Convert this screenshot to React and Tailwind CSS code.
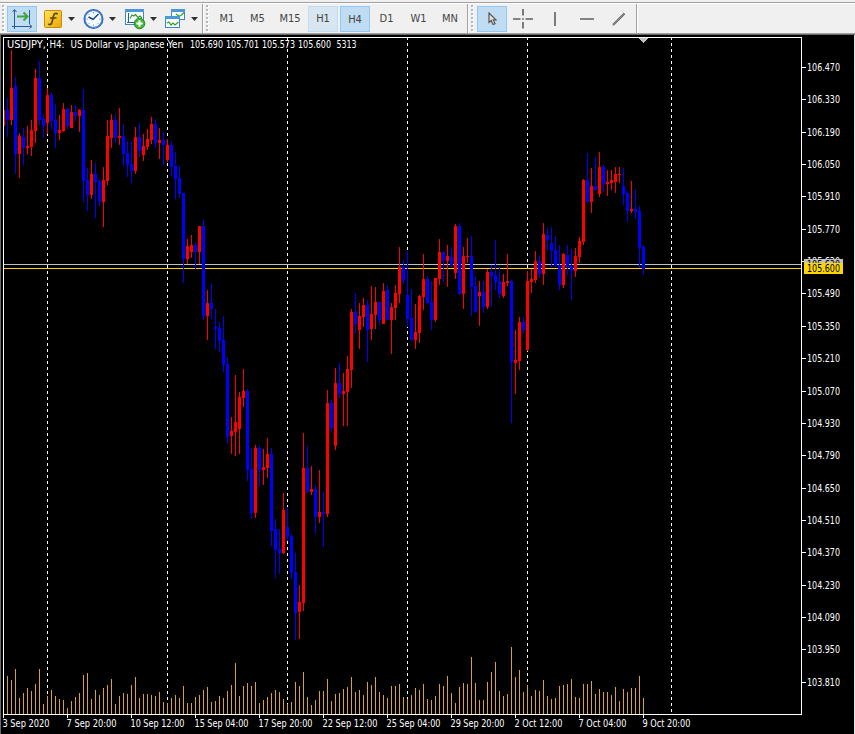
import React from 'react';

// Chart geometry
const STEP = 4;
const LEFT = 3;
const RIGHT = 801;
const TOP = 37;
const BASE = 714;

// [direction, high, body top, body bottom, low], 1 = up (red), 0 = down (blue)
const CANDLES = [
  [1, 110, 110, 126, 126], [0, 98, 110, 120, 137], [1, 50, 88, 120, 125], [0, 77, 86, 154, 174],
  [1, 133, 136, 154, 178], [0, 128, 137, 148, 165], [1, 126, 146, 148, 154], [1, 120, 130, 147, 156],
  [1, 69, 78, 131, 143], [0, 61, 78, 120, 125], [0, 115, 119, 126, 138], [1, 88, 95, 123, 134],
  [0, 93, 95, 121, 129], [0, 104, 120, 133, 148], [1, 115, 130, 133, 140], [1, 103, 109, 131, 132],
  [0, 108, 109, 126, 129], [1, 105, 112, 128, 128], [0, 105, 112, 116, 121], [1, 109, 110, 116, 132],
  [0, 89, 110, 181, 202], [0, 168, 180, 195, 211], [1, 160, 174, 195, 199], [0, 163, 174, 182, 218],
  [0, 180, 181, 202, 206], [1, 167, 180, 202, 227], [1, 120, 136, 181, 185], [1, 114, 120, 138, 148],
  [0, 114, 120, 138, 143], [1, 108, 136, 138, 145], [0, 124, 136, 154, 166], [0, 141, 153, 165, 177],
  [0, 141, 164, 171, 183], [1, 127, 137, 171, 174], [0, 123, 137, 151, 157], [1, 134, 146, 155, 161],
  [1, 129, 139, 147, 150], [1, 117, 124, 140, 144], [0, 119, 124, 143, 148], [1, 128, 140, 143, 159],
  [0, 132, 140, 145, 165], [1, 139, 145, 160, 162], [0, 141, 145, 167, 176], [0, 152, 166, 179, 199],
  [0, 166, 178, 194, 198], [0, 193, 193, 259, 283], [1, 239, 246, 259, 264], [1, 235, 245, 252, 258],
  [0, 242, 245, 252, 270], [1, 226, 226, 252, 264], [0, 220, 226, 316, 320], [1, 290, 303, 316, 340],
  [0, 284, 303, 309, 319], [0, 309, 327, 329, 349], [0, 322, 328, 341, 352], [0, 316, 340, 365, 372],
  [0, 357, 364, 437, 444], [1, 417, 431, 436, 454], [1, 375, 422, 432, 456], [1, 392, 397, 429, 454],
  [1, 369, 391, 398, 407], [0, 389, 391, 470, 481], [0, 448, 469, 513, 519], [1, 445, 448, 513, 518],
  [0, 445, 448, 470, 487], [1, 449, 467, 470, 485], [1, 438, 454, 468, 478], [0, 448, 454, 531, 546],
  [0, 519, 529, 550, 578], [0, 529, 549, 553, 574], [1, 493, 510, 553, 554], [0, 507, 527, 537, 541],
  [0, 534, 536, 573, 579], [0, 553, 572, 613, 640], [1, 585, 602, 612, 639], [1, 433, 468, 603, 611],
  [0, 446, 468, 492, 493], [1, 466, 489, 492, 495], [0, 485, 489, 517, 534], [1, 470, 512, 517, 523],
  [0, 492, 512, 514, 547], [1, 390, 403, 514, 517], [0, 399, 403, 428, 433], [1, 368, 383, 446, 450],
  [0, 363, 383, 394, 398], [1, 373, 391, 394, 426], [1, 356, 369, 392, 426], [1, 309, 312, 370, 388],
  [0, 293, 312, 324, 334], [1, 303, 316, 330, 349], [1, 298, 305, 317, 327], [0, 300, 305, 330, 362],
  [1, 286, 314, 329, 340], [1, 287, 302, 315, 329], [0, 302, 302, 320, 325], [1, 283, 291, 324, 324],
  [0, 285, 290, 320, 320], [1, 303, 307, 320, 354], [1, 285, 293, 308, 320], [1, 247, 267, 294, 303],
  [0, 260, 267, 280, 284], [0, 251, 295, 319, 327], [0, 289, 318, 340, 341], [1, 304, 332, 340, 349],
  [1, 295, 296, 333, 343], [1, 254, 279, 297, 310], [0, 276, 279, 303, 304], [0, 281, 302, 320, 330],
  [1, 278, 278, 320, 322], [1, 239, 252, 279, 285], [0, 251, 252, 261, 282], [1, 245, 256, 261, 287],
  [0, 247, 257, 265, 267], [1, 224, 226, 273, 279], [0, 223, 226, 294, 295], [1, 247, 256, 294, 309],
  [1, 238, 256, 257, 263], [0, 236, 256, 287, 316], [0, 276, 286, 312, 313], [1, 281, 292, 296, 326],
  [0, 281, 292, 307, 313], [1, 269, 272, 307, 309], [0, 265, 272, 276, 307], [0, 240, 275, 282, 290],
  [0, 267, 281, 294, 298], [1, 274, 282, 296, 298], [1, 254, 281, 283, 286], [0, 280, 281, 362, 423],
  [1, 330, 360, 363, 394], [1, 317, 322, 361, 370], [0, 317, 322, 330, 334], [1, 271, 281, 350, 351],
  [1, 269, 279, 282, 293], [1, 251, 261, 280, 283], [0, 255, 261, 274, 278], [1, 223, 234, 274, 285],
  [0, 228, 235, 240, 250], [0, 227, 243, 251, 267], [0, 236, 250, 266, 267], [0, 245, 265, 285, 290],
  [1, 253, 254, 285, 288], [0, 245, 255, 267, 275], [0, 249, 266, 271, 300], [1, 248, 256, 271, 277],
  [1, 237, 241, 257, 263], [1, 179, 180, 242, 245], [0, 153, 180, 202, 203], [1, 168, 186, 202, 213],
  [0, 157, 186, 190, 191], [1, 152, 167, 194, 197], [0, 165, 167, 184, 192], [1, 170, 182, 184, 196],
  [1, 170, 180, 183, 190], [1, 167, 174, 182, 193], [1, 167, 174, 175, 183], [0, 168, 186, 194, 205],
  [0, 191, 193, 211, 222], [1, 181, 209, 211, 213], [0, 189, 209, 212, 219], [0, 206, 211, 248, 268],
  [0, 245, 247, 269, 275],
];

// Top of each tick volume bar, starting with the second candle
const VOLUMES = [
  676, 680, 669, 698, 693, 688, 691, 684, 669, 704, 696, 690, 696, 699, 700, 708, 701, 697, 693, 675,
  673, 699, 690, 695, 688, 685, 679, 704, 696, 693, 694, 685, 677, 698, 694, 694, 695, 696, 692, 702,
  703, 698, 695, 698, 686, 703, 703, 697, 695, 690, 687, 702, 701, 696, 698, 691, 685, 663, 696, 686,
  683, 686, 682, 703, 700, 697, 693, 690, 692, 699, 704, 702, 682, 686, 672, 697, 705, 700, 691, 691,
  679, 701, 694, 693, 689, 687, 677, 692, 690, 695, 682, 685, 677, 692, 695, 698, 686, 686, 684, 697,
  699, 695, 688, 690, 684, 699, 700, 696, 684, 686, 676, 693, 703, 687, 683, 684, 657, 683, 700, 700,
  682, 672, 662, 691, 696, 694, 647, 677, 670, 692, 685, 696, 690, 691, 680, 696, 699, 698, 686, 685,
  684, 679, 697, 698, 684, 684, 681, 694, 689, 692, 692, 695, 687, 701, 689, 692, 688, 688, 676, 698,
];

const SEPARATORS = [47, 167, 287, 407, 527, 671];

const PRICES = [
  [67, '106.470'], [99, '106.330'], [132, '106.190'], [164, '106.050'], [196, '105.910'],
  [229, '105.770'], [261, '105.630'], [293, '105.490'], [326, '105.350'], [358, '105.210'],
  [391, '105.070'], [423, '104.930'], [455, '104.790'], [488, '104.650'], [520, '104.510'],
  [552, '104.370'], [585, '104.230'], [617, '104.090'], [649, '103.950'], [682, '103.810'],
];

// [label, text width]
const DATES = [
  ['3 Sep 2020', 47], ['7 Sep 20:00', 50], ['10 Sep 12:00', 54], ['15 Sep 04:00', 54],
  ['17 Sep 20:00', 54], ['22 Sep 12:00', 55], ['25 Sep 04:00', 54], ['29 Sep 20:00', 54],
  ['2 Oct 12:00', 48], ['7 Oct 04:00', 48], ['9 Oct 20:00', 48],
];

const TITLE = [
  [7, 39, 'USDJPY,'], [49.5, 15, 'H4:'], [70.5, 41, 'US Dollar'], [114, 10, 'vs'],
  [126.5, 38, 'Japanese'], [167.5, 16, 'Yen'], [190, 33, '105.690'], [226, 33, '105.701'],
  [262, 33, '105.573'], [298, 33, '105.600'], [336.5, 20, '5313'],
];

const TIMEFRAMES = [
  ['M1', 'w-[30px] ml-[3px]'],
  ['M5', 'w-[31px]'],
  ['M15', 'w-[34px]'],
  ['H1', 'w-[30px] ml-px border border-[#c0dcf3] bg-[#d8e6f1]'],
  ['H4', 'w-[30px] ml-0.5 border border-[#90c8f6] bg-[#c0dcf3] pt-0.5'],
  ['D1', 'w-[29px] ml-0.5'],
  ['W1', 'w-[33px] ml-px'],
  ['MN', 'w-[30px]'],
];

function Label({ x, y, width, fill = '#fff', children }) {
  return (
    <text x={x} y={y} fill={fill} fontSize="10" textLength={width} lengthAdjust="spacingAndGlyphs">
      {children}
    </text>
  );
}

function Grip({ className }) {
  return (
    <svg className={`shrink-0 ${className}`} width="3" height="28" shapeRendering="crispEdges">
      {[0, 4, 8, 12, 16, 20, 24].map((y) => (
        <g key={y}>
          <rect x="1" y={y + 1} width="2" height="2" fill="#fff" />
          <rect x="0" y={y} width="2" height="2" fill="#b8b8b8" />
        </g>
      ))}
    </svg>
  );
}

function Separator({ className }) {
  return <div className={`h-[30px] w-0.5 shrink-0 border-l border-r border-l-[#a0a0a0] border-r-white ${className}`} />;
}

function Caret() {
  return (
    <svg className="ml-1 mr-2 shrink-0" width="7" height="4">
      <path d="M0 0h7L3.5 4z" fill="#303030" />
    </svg>
  );
}

function ShiftIcon() {
  return (
    <svg width="22" height="22" fill="none">
      <path d="M3.5 2v19M1 18.500h19M18.500 2v14" stroke="#2a5a9c" />
      <path d="M1.500 4l2-2.500 2 2.500M18.500 16.500l2.500 2-2.500 2" stroke="#2a5a9c" />
      <path d="M6 8.500h10M12.500 4.500l4 4-4 4" stroke="#3fa535" strokeWidth="2" />
    </svg>
  );
}

function IndicatorIcon() {
  return (
    <svg className="ml-1.5 shrink-0" width="21" height="20">
      <defs>
        <linearGradient id="gold" x1="0" y1="0" x2="1" y2="1">
          <stop offset="0" stopColor="#ffe45c" />
          <stop offset="1" stopColor="#e9a800" />
        </linearGradient>
      </defs>
      <rect x="1.500" y="1.500" width="17" height="17" rx="1" fill="url(#gold)" stroke="#c98a08" />
      <path d="M14.800 5c-2.300-1.300-3.800-.4-4.300 2l-1.500 6.300c-.5 2.200-1.900 2.700-3.700 1.700M7 9h6.500" fill="none" stroke="#644400" strokeWidth="1.700" />
    </svg>
  );
}

function ClockIcon() {
  return (
    <svg className="shrink-0" width="22" height="22">
      <circle cx="10.500" cy="11" r="9" fill="#f4faff" stroke="#245fbd" strokeWidth="2" />
      <circle cx="10.500" cy="11" r="8.600" fill="none" stroke="#5f9be8" strokeWidth=".8" />
      <path d="M10.500 4v1.500M10.500 16.500V18M3.500 11H5M16 11h1.500M5.500 6l1 1M14.500 15l1 1M5.500 16l1-1" stroke="#8cacd0" />
      <path d="M10 11.500L15.500 6M5.500 9l5 2.500" fill="none" stroke="#1c4274" strokeWidth="1.400" />
    </svg>
  );
}

function NewChartIcon() {
  return (
    <svg className="shrink-0" width="22" height="22" fill="none">
      <rect x="1.500" y="1.500" width="18" height="15" fill="#fafdff" stroke="#3b85cb" />
      <path d="M1 2.500h19" stroke="#4a97dc" strokeWidth="3" />
      <path d="M4.500 5v10M3 14.500h9" stroke="#2463a5" />
      <path d="M6 10.500l2-3.500 2 1 1.500-1.500 2.500 3 2-1.500 2 2" stroke="#349b27" strokeWidth="1.200" />
      <circle cx="15.500" cy="15.500" r="5.300" fill="#43b53b" stroke="#27862a" />
      <path d="M15.500 12.300v6.400M12.300 15.500h6.400" stroke="#fff" strokeWidth="2" />
    </svg>
  );
}

function WindowsIcon() {
  return (
    <svg className="shrink-0" width="22" height="22" fill="none">
      <rect x="6.500" y="1.500" width="13" height="10" fill="#fafdff" stroke="#3b85cb" />
      <path d="M6 2.500h14" stroke="#4a97dc" strokeWidth="3" />
      <path d="M11 6l3 2 2-.5 3-3" stroke="#349b27" strokeWidth="1.200" />
      <rect x=".5" y="8.500" width="14" height="11" fill="#fafdff" stroke="#3b85cb" />
      <path d="M0 9.500h15" stroke="#4a97dc" strokeWidth="3" />
      <path d="M2 15l2-1 2 3 2-2 2 2 3.500-3" stroke="#349b27" strokeWidth="1.200" />
    </svg>
  );
}

function Toolbar() {
  return (
    <div className="flex h-[35px] flex-col bg-[#f0f0f0]">
      <div className="mt-0.5 h-0.5 border-t border-b border-t-[#a0a0a0] border-b-white" />
      <div className="flex h-[29px] items-center">
        <Grip className="ml-0.5" />
        <button className="ml-0.5 flex h-[26px] w-[30px] shrink-0 items-center justify-center border border-[#90c8f6] bg-[#c0dcf3]">
          <ShiftIcon />
        </button>
        <IndicatorIcon />
        <Caret />
        <ClockIcon />
        <Caret />
        <NewChartIcon />
        <Caret />
        <WindowsIcon />
        <Caret />
        <Separator className="-ml-1" />
        <Grip className="ml-0.5" />
        {TIMEFRAMES.map(([name, style]) => (
          <button
            key={name}
            className={`flex h-[26px] shrink-0 items-center justify-center text-[11px] leading-none text-[#444] ${style}`}
          >
            {name}
          </button>
        ))}
        <Separator className="ml-0.5" />
        <Grip className="ml-0.5" />
        <button className="ml-[3px] flex h-[26px] w-[30px] shrink-0 items-center justify-center border border-[#90c8f6] bg-[#c0dcf3]">
          <svg width="10" height="14">
            <path d="M2 1v9.500l2.200-2L6 12.500l2-.9-1.700-3.700H9z" fill="#e8e0da" stroke="#555" strokeWidth="1.200" />
          </svg>
        </button>
        <svg className="shrink-0" width="129" height="26" fill="none" stroke="#606060" strokeWidth="1.600">
          <path d="M6 13h7.500M18.500 13H26M16 3v6.500M16 16v6.500M15.200 13h1.600" />
          <path d="M48 6v14M73 13h14" />
          <path d="M106 19L117.500 7.500" stroke="#555" strokeWidth="2" />
          <path d="M106 19L117.500 7.500" stroke="#aaa" strokeWidth=".7" />
        </svg>
        <Separator />
      </div>
      <div className="h-0.5 border-t border-b border-t-[#a0a0a0] border-b-[#696969]" />
    </div>
  );
}

function Chart() {
  return (
    <svg className="block" width="855" height="699" viewBox="0 35 855 699" shapeRendering="crispEdges">
      <rect x="0" y="35" width="855" height="699" fill="#000" />
      <rect x="0" y="35" width="1" height="699" fill="#696969" />
      <rect x="854" y="35" width="1" height="699" fill="#e3e3e3" />

      {/* current bid and ask */}
      <rect x={LEFT} y="264" width={RIGHT - LEFT} height="1" fill="#c0c0c0" />
      <rect x={LEFT} y="268" width={RIGHT - LEFT} height="1" fill="#ffd700" />

      {SEPARATORS.map((x) => (
        <path key={x} d={`M${x + 0.5} ${TOP}V${BASE}`} stroke="#fff" strokeDasharray="3 3" />
      ))}

      {VOLUMES.map((y, i) => (
        <rect key={i} x={LEFT + (i + 1) * STEP} y={y} width="1" height={BASE - y} fill="#daa520" />
      ))}

      {CANDLES.map(([up, high, top, bottom, low], i) => {
        const x = LEFT + i * STEP;
        return (
          <g key={i} fill={up ? '#f00' : '#00f'}>
            <rect x={x} y={high} width="1" height={low - high} />
            <rect x={x - 1} y={top} width="3" height={bottom - top} />
          </g>
        );
      })}

      {/* hides the half of the first candle left of the frame */}
      <rect x="1" y="36" width="2" height="690" fill="#000" />
      <rect x={LEFT + 0.5} y={TOP + 0.5} width={RIGHT - LEFT} height={BASE - TOP} fill="none" stroke="#fff" />
      <path d="M639 38h9l-4.500 5z" fill="#c0c0c0" />

      {TITLE.map(([x, width, text]) => (
        <Label key={x} x={x} y={48} width={width}>{text}</Label>
      ))}

      {PRICES.map(([y, price]) => (
        <g key={price}>
          <rect x={RIGHT + 1} y={y} width="4" height="1" fill="#fff" />
          <Label x={807} y={y + 4} width={33}>{price}</Label>
        </g>
      ))}

      <rect x="804" y="259" width="39" height="11" fill="#c0c0c0" />
      <Label x={807} y={268} width={33} fill="#000">105.620</Label>
      <rect x="804" y="263" width="39" height="11" fill="#ffd700" />
      <Label x={807} y={272} width={33} fill="#000">105.600</Label>

      {DATES.map(([date, width], i) => (
        <g key={date}>
          <rect x={LEFT + i * 64} y={BASE + 1} width="1" height="3" fill="#fff" />
          <Label x={LEFT - 0.5 + i * 64} y={727} width={width}>{date}</Label>
        </g>
      ))}
    </svg>
  );
}

export default function App() {
  return (
    <div className="h-[734px] w-[855px] overflow-hidden bg-black font-['DejaVu_Sans_Condensed','DejaVu_Sans',sans-serif]">
      <Toolbar />
      <Chart />
    </div>
  );
}
